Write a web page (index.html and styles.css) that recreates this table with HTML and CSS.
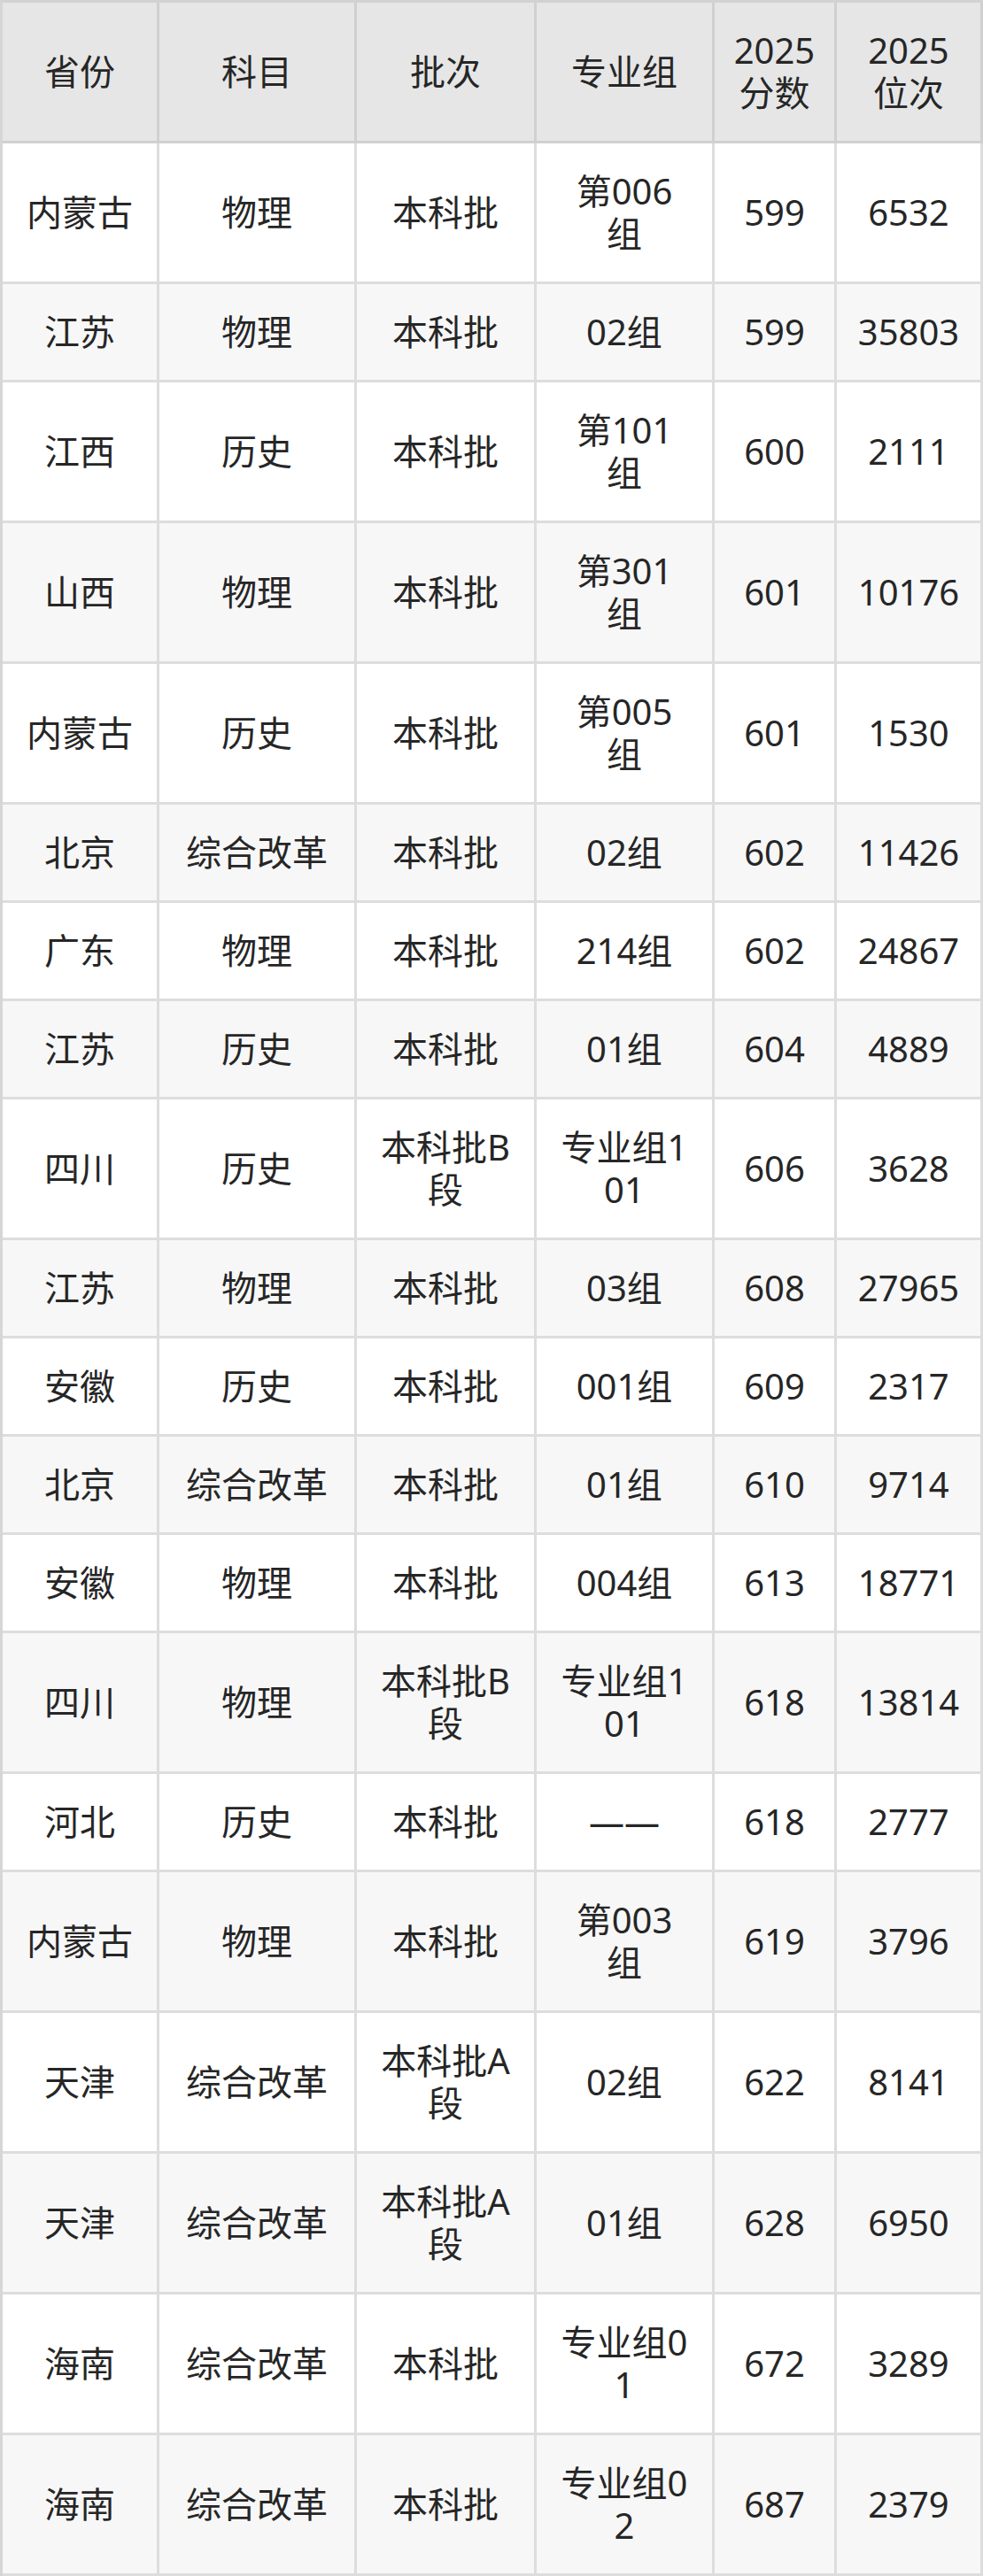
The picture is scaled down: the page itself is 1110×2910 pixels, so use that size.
FILE: index.html
```
<!DOCTYPE html>
<html lang="zh-CN">
<head>
<meta charset="utf-8">
<title>分数线</title>
<link rel="stylesheet" href="styles.css">
</head>
<body>
<table class="score-table">
  <thead>
    <tr>
      <th class="c1">省份</th>
      <th class="c2">科目</th>
      <th class="c3">批次</th>
      <th class="c4">专业组</th>
      <th class="c5">2025分数</th>
      <th class="c6">2025位次</th>
    </tr>
  </thead>
  <tbody>
    <tr><td>内蒙古</td><td>物理</td><td>本科批</td><td>第006组</td><td>599</td><td>6532</td></tr>
    <tr><td>江苏</td><td>物理</td><td>本科批</td><td>02组</td><td>599</td><td>35803</td></tr>
    <tr><td>江西</td><td>历史</td><td>本科批</td><td>第101组</td><td>600</td><td>2111</td></tr>
    <tr><td>山西</td><td>物理</td><td>本科批</td><td>第301组</td><td>601</td><td>10176</td></tr>
    <tr><td>内蒙古</td><td>历史</td><td>本科批</td><td>第005组</td><td>601</td><td>1530</td></tr>
    <tr><td>北京</td><td>综合改革</td><td>本科批</td><td>02组</td><td>602</td><td>11426</td></tr>
    <tr><td>广东</td><td>物理</td><td>本科批</td><td>214组</td><td>602</td><td>24867</td></tr>
    <tr><td>江苏</td><td>历史</td><td>本科批</td><td>01组</td><td>604</td><td>4889</td></tr>
    <tr><td>四川</td><td>历史</td><td>本科批B段</td><td>专业组101</td><td>606</td><td>3628</td></tr>
    <tr><td>江苏</td><td>物理</td><td>本科批</td><td>03组</td><td>608</td><td>27965</td></tr>
    <tr><td>安徽</td><td>历史</td><td>本科批</td><td>001组</td><td>609</td><td>2317</td></tr>
    <tr><td>北京</td><td>综合改革</td><td>本科批</td><td>01组</td><td>610</td><td>9714</td></tr>
    <tr><td>安徽</td><td>物理</td><td>本科批</td><td>004组</td><td>613</td><td>18771</td></tr>
    <tr><td>四川</td><td>物理</td><td>本科批B段</td><td>专业组101</td><td>618</td><td>13814</td></tr>
    <tr><td>河北</td><td>历史</td><td>本科批</td><td>——</td><td>618</td><td>2777</td></tr>
    <tr><td>内蒙古</td><td>物理</td><td>本科批</td><td>第003组</td><td>619</td><td>3796</td></tr>
    <tr><td>天津</td><td>综合改革</td><td>本科批A段</td><td>02组</td><td>622</td><td>8141</td></tr>
    <tr><td>天津</td><td>综合改革</td><td>本科批A段</td><td>01组</td><td>628</td><td>6950</td></tr>
    <tr><td>海南</td><td>综合改革</td><td>本科批</td><td>专业组01</td><td>672</td><td>3289</td></tr>
    <tr><td>海南</td><td>综合改革</td><td>本科批</td><td>专业组02</td><td>687</td><td>2379</td></tr>
  </tbody>
</table>
</body>
</html>
```

FILE: styles.css
```
html, body {
  margin: 0;
  padding: 0;
  background: #ffffff;
}

.score-table {
  width: 1110px;
  table-layout: fixed;
  border-collapse: separate;
  border-spacing: 0;
  border-top: 3px solid #d2d2d2;
  border-left: 3px solid #d6d6d6;
  font-family: "Noto Sans", "Noto Sans CJK SC", sans-serif;
  font-size: 40px;
  line-height: 48px;
  color: #262626;
}

.score-table th,
.score-table td {
  box-sizing: border-box;
  padding: 30px 12px;
  text-align: center;
  vertical-align: middle;
  font-weight: normal;
  word-break: break-all;
  border-right: 3px solid #dddddd;
  border-bottom: 3px solid #dddddd;
}

.score-table th {
  background: #e6e6e6;
  border-right-color: #d0d0d0;
  border-bottom-color: #d0d0d0;
}

.score-table td:nth-child(3),
.score-table td:nth-child(4) {
  padding-left: 26px;
  padding-right: 26px;
}

.score-table th:nth-child(6),
.score-table td:nth-child(6) {
  padding-left: 20px;
  padding-right: 20px;
}

.score-table tbody tr:nth-child(even) td {
  background: #f7f7f7;
}

.c1 { width: 177px; }
.c2 { width: 223px; }
.c3 { width: 203px; }
.c4 { width: 201px; }
.c5 { width: 138px; }
.c6 { width: 165px; }
```
